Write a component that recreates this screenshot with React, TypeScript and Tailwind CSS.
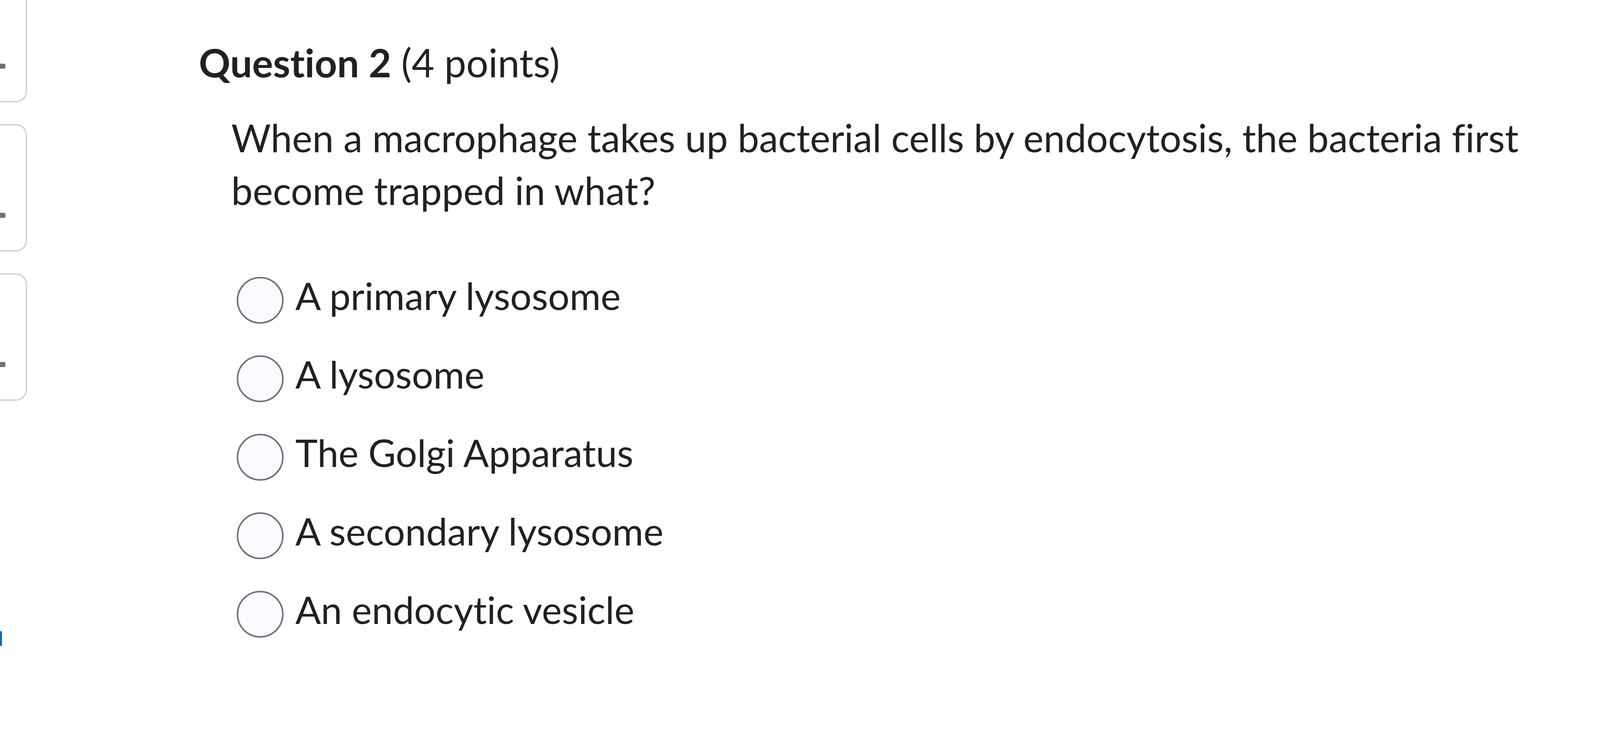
import React from 'react';

const options = [
  'A primary lysosome',
  'A lysosome',
  'The Golgi Apparatus',
  'A secondary lysosome',
  'An endocytic vesicle',
];

const SideCard = ({ first }: { first?: boolean }) => (
  <div
    className={`relative h-[326px] w-[181px] -ml-[112px] rounded-[28px] border-[3px] border-[#c6ccd1] bg-white ${
      first ? '-mt-[64px]' : 'mt-[56px]'
    }`}
  >
    <div className="absolute left-[109px] top-[224px] h-[13px] w-[14px] rounded-r-[4px] bg-[#6e7376]" />
  </div>
);

export default function App() {
  return (
    <div className="flex min-h-screen w-full overflow-hidden bg-white font-['Lato','Noto_Sans',sans-serif] text-[#202122] [font-variant-ligatures:none]">
      <div className="flex w-[69px] shrink-0 flex-col">
        <SideCard first />
        <SideCard />
        <SideCard />
        <div className="mt-[590px] h-[38px] w-[5px] rounded-tr-[4px] bg-[#006fbf]" />
      </div>

      <div className="flex min-w-0 flex-col pl-[440px]">
        <h2 className="mt-[100px] whitespace-nowrap text-[100px] leading-[118px]">
          <span className="font-bold">Question 2</span> <span className="font-normal">(4 points)</span>
        </h2>

        <div className="mt-[67px] pl-[83px] text-[98px] leading-[135px]">
          <p className="whitespace-nowrap">
            When a macrophage takes up bacterial cells by endocytosis, the bacteria first
          </p>
          <p className="whitespace-nowrap">become trapped in what?</p>
        </div>

        <div className="mt-[143px] flex flex-col pl-[97px]">
          {options.map((opt) => (
            <label key={opt} className="flex h-[201px] items-start">
              <span className="mt-[11px] h-[120px] w-[120px] shrink-0 rounded-full border-[4px] border-[#6e7376] bg-[#f9fbff]" />
              <span className="ml-[30px] whitespace-nowrap text-[97px] leading-[118px]">{opt}</span>
            </label>
          ))}
        </div>
      </div>
    </div>
  );
}
